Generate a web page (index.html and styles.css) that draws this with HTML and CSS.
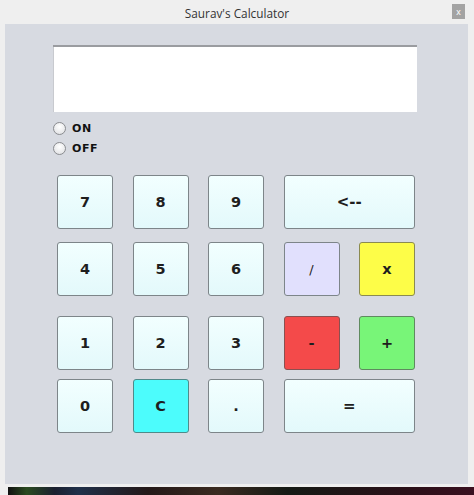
FILE: index.html
```html
<!DOCTYPE html>
<html lang="en">
<head>
    <meta charset="UTF-8">
    <meta name="viewport" content="width=device-width, initial-scale=1.0">
    <title>Saurav's Calculator</title>
    <link rel="stylesheet" href="styles.css">
</head>
<body>

<div class="window">
    <!-- Title bar -->
    <div class="titlebar">
        <span class="title">Saurav's Calculator</span>
        <span class="close">x</span>
    </div>

    <div class="content">
        <div class="display"></div>

        <label class="radio"><span class="dot"></span>ON</label>
        <label class="radio"><span class="dot"></span>OFF</label>

        <div class="keys">
            <div class="row row-1">
                <button class="key">7</button>
                <button class="key">8</button>
                <button class="key">9</button>
                <button class="key wide">&lt;--</button>
            </div>
            <div class="row row-2">
                <button class="key">4</button>
                <button class="key">5</button>
                <button class="key">6</button>
                <button class="key divide">/</button>
                <button class="key times">x</button>
            </div>
            <div class="row row-3">
                <button class="key">1</button>
                <button class="key">2</button>
                <button class="key">3</button>
                <button class="key minus">-</button>
                <button class="key plus">+</button>
            </div>
            <div class="row row-4">
                <button class="key">0</button>
                <button class="key clear">C</button>
                <button class="key">.</button>
                <button class="key wide">=</button>
            </div>
        </div>
    </div>
</div>

<div class="taskbar"></div>

</body>
</html>
```

FILE: styles.css
```css
body {
    margin: 0;
    width: 474px;
    height: 495px;
    overflow: hidden;
    background-color: #efefef;
    font-family: "DejaVu Sans", sans-serif;
}
.window {
    height: 487px;
    display: flex;
    flex-direction: column;
}
.titlebar {
    height: 24px;
    flex: none;
    position: relative;
    display: flex;
    align-items: center;
    justify-content: center;
    background-color: #efefef;
}
.title {
    font-family: "Open Sans", sans-serif;
    font-size: 11.8px;
    color: #333;
    padding-top: 1px;
}
.close {
    position: absolute;
    right: 9px;
    top: 4px;
    width: 13px;
    height: 15px;
    background-color: #a3a3a3;
    color: #fff;
    font-family: "Liberation Sans", sans-serif;
    font-size: 9px;
    display: flex;
    align-items: center;
    justify-content: center;
}
.content {
    flex: 1;
    margin: 0 6px 3px 5px;
    background-color: #d7dae1;
    padding: 21px 0 0 48px;
}
.display {
    width: 364px;
    height: 65px;
    background-color: #fff;
    border-top: 2px solid #9a9ca0;
    box-shadow: inset 1px 0 0 #c8cacf;
    margin-bottom: 6px;
}
.radio {
    display: flex;
    align-items: center;
    height: 20px;
    font-size: 11px;
    font-weight: bold;
    color: #111;
    letter-spacing: 0.6px;
}
.dot {
    width: 11px;
    height: 11px;
    border-radius: 50%;
    border: 1px solid #8a8c90;
    background: radial-gradient(circle at 50% 35%, #ffffff, #dcdde0);
    margin-right: 6px;
}
.keys {
    margin-left: 4px;
    margin-top: 17px;
}
.row {
    display: grid;
    grid-template-columns: repeat(5, 56px);
    column-gap: 19.5px;
    height: 54px;
}
.row-2 { margin-top: 13px; }
.row-3 { margin-top: 20px; }
.row-4 { margin-top: 9px; }
.key {
    margin: 0;
    padding: 0;
    border: 1px solid #7d8589;
    border-radius: 3px;
    background: linear-gradient(#f2ffff, #e3f9fb);
    font-family: "DejaVu Sans", sans-serif;
    font-weight: bold;
    font-size: 14.5px;
    color: #1e1e1e;
}
.key.wide {
    grid-column: span 2;
    font-size: 15px;
}
.key.divide { background: #e1e0fd; font-weight: normal; font-size: 13px; }
.key.times { background: #fdfd48; border-color: #8a8a50; }
.key.minus { background: #f44a4a; border-color: #8a5050; }
.key.plus { background: #78f578; border-color: #5f8a5f; }
.key.clear { background: #4cfcfc; border-color: #4f8a8a; }
.taskbar {
    height: 8px;
    margin-left: 8px;
    background: linear-gradient(90deg, #111 0%, #2a4a20 4%, #1b2030 10%, #20304a 15%, #241818 30%, #3a2a20 45%, #151a15 60%, #2a1018 85%, #3a1020 100%);
}
```
